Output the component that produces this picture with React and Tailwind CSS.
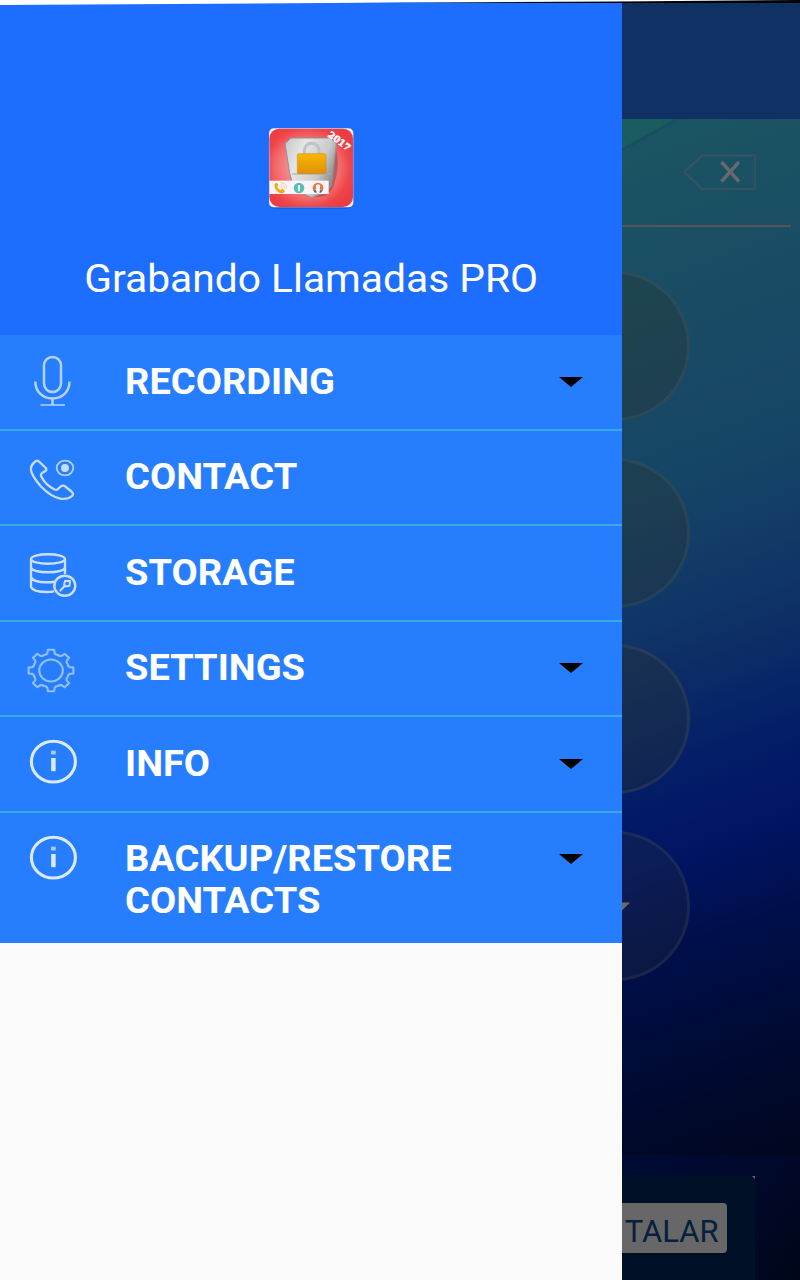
import React from "react";

function AppIcon() {
  return (
    <svg className="block h-[82px] w-[86px]" viewBox="54 51 258 246" role="img" aria-label="2017">
      <defs>
        <radialGradient id="red" cx="0.46" cy="0.5" r="0.6">
          <stop offset="0.25" stopColor="#f59c9c" />
          <stop offset="0.65" stopColor="#f2686a" />
          <stop offset="0.85" stopColor="#ee4448" />
          <stop offset="1" stopColor="#ea3d43" />
        </radialGradient>
        <linearGradient id="steel" x1="0" y1="0" x2="1" y2="0.5">
          <stop offset="0" stopColor="#c5c5c5" />
          <stop offset="0.35" stopColor="#e6e6e6" />
          <stop offset="0.75" stopColor="#cacaca" />
          <stop offset="1" stopColor="#8f8f8f" />
        </linearGradient>
        <linearGradient id="gold" x1="0" y1="0" x2="0" y2="1">
          <stop offset="0" stopColor="#f9b800" />
          <stop offset="1" stopColor="#e18f09" />
        </linearGradient>
      </defs>
      <rect x="58" y="60" width="251" height="236" rx="16" fill="#1750bd" opacity="0.6" />
      <rect x="57" y="55" width="253" height="237" rx="14" fill="#f5e9f4" />
      <rect x="58" y="56" width="251" height="235" rx="30" fill="url(#red)" />
      <path d="M246 96 Q280 150 248 235 Q225 270 180 258 L230 240Z" fill="#7d4548" opacity="0.5" />
      <path d="M122 84 L240 84 L259 101 L244 228 L219 249 L185 263 L133 239 L119 190 L105 101Z" fill="url(#steel)" stroke="#929292" strokeWidth="3" />
      <path d="M125 192 H245" stroke="#aaa" strokeWidth="3" />
      <path d="M163 132 V121 a22 21 0 0 1 44 0 V132" fill="none" stroke="#c2c2c2" strokeWidth="9" />
      <rect x="142" y="131" width="86" height="60" rx="4" fill="url(#gold)" stroke="#bd8620" strokeWidth="1.5" />
      <rect x="58" y="212" width="178" height="40" fill="#fdf3f8" />
      <path d="M74 221 q7 -5 10 2 q2 5 -3 7 q3 7 11 10 q4 -5 10 -1 q5 5 -1 9 q-10 5 -20 -5 q-10 -11 -7 -22Z" fill="#edab13" />
      <path d="M91 230 q7 0 8 7 M91 224 q13 0 14 13 M91 218 q18 0 20 18" fill="none" stroke="#efcf9b" strokeWidth="2.5" />
      <circle cx="147" cy="234" r="16" fill="#5bbfb3" />
      <path d="M147 225 V244" stroke="#e8f6f2" strokeWidth="6" />
      <circle cx="204" cy="234" r="16" fill="#e9743c" />
      <path d="M191 245 q1 -6 8 -8 q-5 -13 5 -14 q10 1 5 14 q7 2 8 8 l-5 4 h-16Z" fill="#fdf3f8" />
      <path d="M190 242 l8 -3 l2 9 h-5Z M218 242 l-8 -3 l-2 9 h5Z" fill="#5b6477" />
      <text x="232" y="78" transform="rotate(37 232 78)" className="font-['DejaVu_Serif',serif] text-[27px] font-bold" fill="#fff" stroke="#fff" strokeWidth="1.5" textLength="76" lengthAdjust="spacingAndGlyphs">2017</text>
    </svg>
  );
}

const gearPath = (() => {
  const profile = [
    [-22.5, 0.8], [-16, 0.79], [-11, 0.84], [-8, 1], [8, 1], [11, 0.84], [16, 0.79],
  ];
  const pts = [];
  for (let i = 0; i < 8; i++) {
    for (const [a, r] of profile) {
      const t = ((i * 45 + a) * Math.PI) / 180;
      pts.push(`${(51 + 22.6 * r * Math.cos(t)).toFixed(2)} ${(48.5 + 21 * r * Math.sin(t)).toFixed(2)}`);
    }
  }
  return `M${pts.join("L")}Z`;
})();

const icons = {
  mic: (
    <g strokeWidth="2.5" opacity="0.66">
      <rect x="44" y="22" width="17" height="35" rx="8.5" />
      <path d="M35.3 46.5 C35.3 57 43 63.5 52.5 63.5 C62 63.5 69.5 57 69.5 46.5 M52.5 63.5 V70" />
      <path d="M40.5 70 H65" strokeWidth="1.5" />
    </g>
  ),
  phone: (
    <g strokeWidth="2.3" opacity="0.74">
      <path d="M36 30 Q37.5 29 39 30.5 L45.7 37 Q47 38.5 45.5 40 L42 42 Q40.3 43.5 41.3 45.5 Q45 53.5 54.5 58.5 Q57 59.5 58.5 57.5 L61 55.2 Q62.7 54 64.7 55 L72 61 Q74 63 72 65 Q68 68.5 61 67.8 Q51 66 41 55.500 Q30 43 31 37 Q31.500 33 36 30Z" />
      <ellipse cx="65" cy="37" rx="8.3" ry="7.4" strokeWidth="1.8" opacity="0.85" />
      <circle cx="65" cy="37" r="4" fill="#fff" stroke="none" />
    </g>
  ),
  storage: (
    <g strokeWidth="2.4" opacity="0.76">
      <ellipse cx="48" cy="33" rx="17" ry="4.8" />
      <path d="M31 33 V61 Q33 66 47 66 Q51 66 54 65.3 M65 33 V48 M31 42 Q34 46.3 48 46.3 Q62 46.3 65 42 M31 51.5 Q34 56.3 46 56.3 Q51 56.3 55 55.7" />
      <ellipse cx="64.8" cy="59.7" rx="10.5" ry="10" />
      <path d="M65.2 54.8 L70 55 L69.5 59.8 L66 60.5 L64 58.5Z M65 59.5 L59.8 65.2" strokeWidth="2" />
    </g>
  ),
  gear: (
    <g strokeWidth="2.1" opacity="0.5">
      <path d={gearPath} />
      <ellipse cx="51" cy="48.5" rx="11.8" ry="11" />
    </g>
  ),
  info: (
    <g strokeWidth="3" opacity="0.84">
      <ellipse cx="53.4" cy="44.6" rx="22" ry="20.4" strokeWidth="3.1" />
      <path d="M53.4 41 V54.200" strokeWidth="4.5" />
      <path d="M53.4 33.7 V37.500" strokeWidth="4.5" opacity="0.75" />
    </g>
  ),
};

const items = [
  { label: "RECORDING", icon: "mic", expandable: true },
  { label: "CONTACT", icon: "phone" },
  { label: "STORAGE", icon: "storage" },
  { label: "SETTINGS", icon: "gear", expandable: true },
  { label: "INFO", icon: "info", expandable: true },
  { label: "BACKUP/RESTORE CONTACTS", icon: "info", expandable: true, last: true },
];

function MenuItem({ label, icon, expandable, last }) {
  return (
    <li className={last ? "flex h-[130.5px] items-start" : "flex h-[95.5px] items-start border-b-2 border-[#3aaae6]"}>
      <svg className="h-[93px] w-[110px] shrink-0" viewBox="0 0 110 93" fill="none" stroke="#fff" strokeLinecap="butt" strokeLinejoin="round">
        {icons[icon]}
      </svg>
      <span className="ml-[14.5px] w-[400px] origin-left scale-x-[1.057] pt-[26.5px] text-[36px] leading-[41.5px] font-bold text-white">{label}</span>
      {expandable && (
        <svg className="mt-[41.5px] ml-[34.5px] h-[10px] w-[24px]" viewBox="0 0 24 10">
          <path d="M0 0H24L12 10Z" fill="#000" />
        </svg>
      )}
    </li>
  );
}

function Drawer() {
  return (
    <nav className="flex w-[622px] shrink-0 flex-col bg-[#fafafa]">
      <header className="flex h-[335px] shrink-0 flex-col items-center bg-[#1d6dff] pt-[127px]">
        <AppIcon />
        <h1 className="mt-[47px] scale-x-[1.045] text-[39px] leading-[46px] whitespace-nowrap text-white">Grabando Llamadas PRO</h1>
      </header>
      <ul className="flex flex-col bg-[#267eff]">
        {items.map((item) => (
          <MenuItem key={item.label} {...item} />
        ))}
      </ul>
    </nav>
  );
}

function Dialer() {
  return (
    <main className="flex w-[178px] flex-col overflow-hidden bg-[#0f3163]">
      <div className="h-[119px] shrink-0" />
      <div className="flex grow flex-col bg-[linear-gradient(160deg,#1b5561_0%,#1a5063_10%,#184965_22%,#154566_31%,#113a67_39%,#0d2e66_46%,#041f68_54%,#001463_62%,#000f4c_69%,#000a33_79%,#00071e_90%,#000725_100%)]">
        <div className="flex h-[108px] shrink-0 flex-col">
          <svg className="h-[106px] w-[178px]" viewBox="0 0 178 106" fill="none">
            <path d="M0 0H54L0 30Z" fill="#1d6562" opacity="0.45" />
            <path d="M0 31L54 1" stroke="#154763" strokeWidth="3" opacity="0.5" />
            <path d="M62 53L80 36.5H133V70H80Z" stroke="#385264" strokeWidth="1.8" />
            <path d="M99.5 43L117 62.5M117 43L99.5 62.5" stroke="#66696f" strokeWidth="3.4" />
          </svg>
          <div className="h-[2px] w-[169px] bg-[#5c5356]" />
        </div>
        <div className="mt-[44px] -ml-[82.5px] flex shrink-0 flex-col gap-[36.7px]">
          <div className="size-[150px] rounded-full border-[3px] border-[#8c8c8c]/12 bg-[#2b332e]/35" />
          <div className="size-[150px] rounded-full border-[3px] border-[#8c8c8c]/12 bg-[#2b332e]/35" />
          <div className="size-[150px] rounded-full border-[3px] border-[#8c8c8c]/12 bg-[#2b332e]/35" />
          <div className="flex size-[150px] items-center rounded-full border-[3px] border-[#8c8c8c]/12 bg-[#2b332e]/25">
            <svg className="ml-[79.5px] h-[9px] w-[8px]" viewBox="0 0 8 9">
              <path d="M0 0.5H8L0 8.5Z" fill="#6d6966" />
            </svg>
          </div>
        </div>
        <div className="mt-auto flex h-[125px] shrink-0 items-end bg-[linear-gradient(125deg,#000b35,#00092b_55%,#000619)]">
          <div className="flex h-[104px] w-[133px] items-start bg-[#001127] pt-[27px]">
            <div className="flex h-[50px] w-[105px] items-center justify-end rounded-r-[4px] bg-[#676767] pt-[8px] pr-[8.5px] text-[31px] text-[#06203d] shadow-md">TALAR</div>
            <svg className="-mt-[27px] ml-[25px] h-[3px] w-[3px]" viewBox="0 0 3 3">
              <path d="M0 0H3V3Z" fill="#66666a" />
            </svg>
          </div>
        </div>
      </div>
    </main>
  );
}

export default function App() {
  return (
    <div className="relative flex h-[1280px] w-[800px] overflow-hidden font-['Roboto',sans-serif]">
      <Drawer />
      <Dialer />
      <svg className="absolute top-0 left-0 h-[6px] w-[800px]" viewBox="0 0 800 6" aria-hidden="true">
        <defs>
          <linearGradient id="edge">
            <stop offset="0.25" stopColor="#000" stopOpacity="0" />
            <stop offset="0.55" stopColor="#000" />
          </linearGradient>
        </defs>
        <path d="M0 0H800V2.5H400L0 5Z" fill="#fff" />
        <path d="M200 3.2L620 1.6L800 0V3H400Z" fill="url(#edge)" />
      </svg>
    </div>
  );
}
